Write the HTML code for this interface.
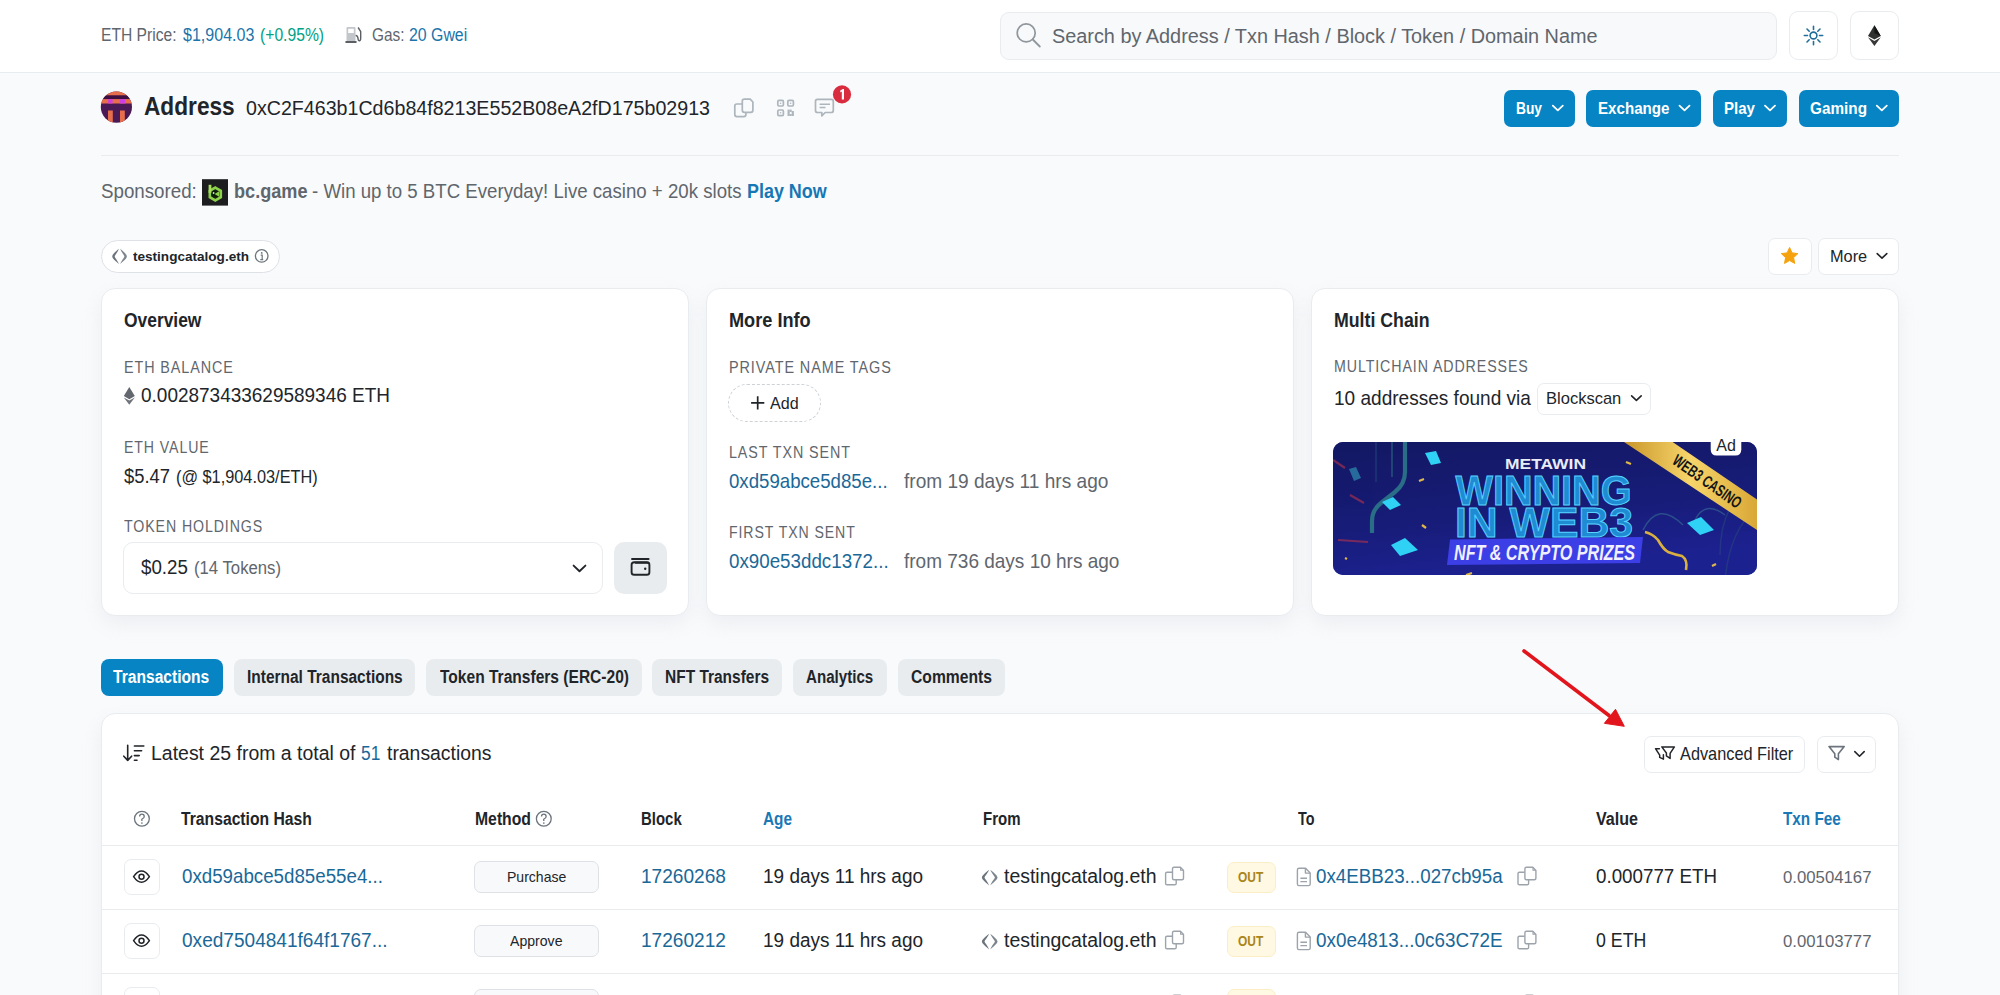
<!DOCTYPE html>
<html><head><meta charset="utf-8">
<style>
html,body{margin:0;padding:0}
body{width:2000px;height:995px;overflow:hidden;position:relative;background:#f9fafb;font-family:"Liberation Sans",sans-serif;color:#212529}
.t{position:absolute;white-space:nowrap;transform-origin:0 0}
.a{position:absolute;box-sizing:border-box}
svg{position:absolute;overflow:visible}
</style></head><body>
<!-- header -->
<div class="a" style="left:0;top:0;width:2000px;height:73px;background:#fff;border-bottom:1px solid #e9ecef"></div>
<div class="a" style="left:1000px;top:12px;width:777px;height:48px;background:#f8f9fa;border:1px solid #e9ecef;border-radius:9px"></div>
<div class="a" style="left:1789px;top:11px;width:49px;height:49px;background:#fff;border:1px solid #e9ecef;border-radius:9px"></div>
<div class="a" style="left:1850px;top:11px;width:49px;height:49px;background:#fff;border:1px solid #e9ecef;border-radius:9px"></div>
<!-- address row -->
<div class="a" style="left:101px;top:155px;width:1798px;height:1px;background:#e9ecef"></div>
<div class="a" style="left:1504px;top:89.5px;width:71px;height:37px;background:#0784c3;border-radius:7px"></div>
<div class="a" style="left:1586px;top:89.5px;width:115px;height:37px;background:#0784c3;border-radius:7px"></div>
<div class="a" style="left:1712.5px;top:89.5px;width:74.5px;height:37px;background:#0784c3;border-radius:7px"></div>
<div class="a" style="left:1799px;top:89.5px;width:100px;height:37px;background:#0784c3;border-radius:7px"></div>
<!-- name tag + more -->
<div class="a" style="left:101px;top:240px;width:179px;height:33px;background:#fff;border:1px solid #dee2e6;border-radius:17px"></div>
<div class="a" style="left:1768px;top:238px;width:44px;height:37px;background:#fff;border:1px solid #e9ecef;border-radius:7px"></div>
<div class="a" style="left:1818px;top:238px;width:81px;height:37px;background:#fff;border:1px solid #e9ecef;border-radius:7px"></div>
<!-- cards -->
<div class="a" style="left:101px;top:288px;width:588px;height:328px;background:#fff;border:1px solid #e9ecef;border-radius:14px;box-shadow:0 8px 19px rgba(189,197,209,.2)"></div>
<div class="a" style="left:706px;top:288px;width:588px;height:328px;background:#fff;border:1px solid #e9ecef;border-radius:14px;box-shadow:0 8px 19px rgba(189,197,209,.2)"></div>
<div class="a" style="left:1311px;top:288px;width:588px;height:328px;background:#fff;border:1px solid #e9ecef;border-radius:14px;box-shadow:0 8px 19px rgba(189,197,209,.2)"></div>
<div class="a" style="left:123px;top:542px;width:480px;height:52px;background:#fff;border:1px solid #e9ecef;border-radius:10px"></div>
<div class="a" style="left:614px;top:542px;width:53px;height:52px;background:#e9ecef;border-radius:10px"></div>
<div class="a" style="left:728px;top:384px;width:93px;height:38px;background:#fff;border:1.3px dashed #cdd2d7;border-radius:19px"></div>
<div class="a" style="left:1537px;top:383px;width:114px;height:32px;background:#fff;border:1px solid #e9ecef;border-radius:7px"></div>
<div class="a" style="left:1333px;top:442px;width:424px;height:133px;background:#1b2a8c;border-radius:10px"></div>
<!-- tabs -->
<div class="a" style="left:100.5px;top:659px;width:122px;height:37px;background:#0784c3;border-radius:8px"></div>
<div class="a" style="left:234px;top:659px;width:181px;height:37px;background:#e9ecef;border-radius:8px"></div>
<div class="a" style="left:426px;top:659px;width:215.5px;height:37px;background:#e9ecef;border-radius:8px"></div>
<div class="a" style="left:652px;top:659px;width:130px;height:37px;background:#e9ecef;border-radius:8px"></div>
<div class="a" style="left:793px;top:659px;width:93.5px;height:37px;background:#e9ecef;border-radius:8px"></div>
<div class="a" style="left:897.5px;top:659px;width:107px;height:37px;background:#e9ecef;border-radius:8px"></div>
<!-- txn card -->
<div class="a" style="left:101px;top:713px;width:1798px;height:400px;background:#fff;border:1px solid #e9ecef;border-radius:14px;box-shadow:0 8px 19px rgba(189,197,209,.2)"></div>
<div class="a" style="left:1643.5px;top:736px;width:161px;height:37px;background:#fff;border:1px solid #e9ecef;border-radius:7px"></div>
<div class="a" style="left:1817px;top:736px;width:59px;height:37px;background:#fff;border:1px solid #e9ecef;border-radius:7px"></div>
<div class="a" style="left:102px;top:845px;width:1796px;height:1px;background:#e9ecef"></div>
<div class="a" style="left:102px;top:908.5px;width:1796px;height:1px;background:#e9ecef"></div>
<div class="a" style="left:102px;top:972.5px;width:1796px;height:1px;background:#e9ecef"></div>
<!-- rows boxes -->
<div class="a" style="left:124px;top:859px;width:36px;height:36px;background:#fff;border:1px solid #e9ecef;border-radius:7px"></div>
<div class="a" style="left:124px;top:923px;width:36px;height:36px;background:#fff;border:1px solid #e9ecef;border-radius:7px"></div>
<div class="a" style="left:124px;top:987px;width:36px;height:36px;background:#fff;border:1px solid #e9ecef;border-radius:7px"></div>
<div class="a" style="left:474px;top:861px;width:125px;height:32px;background:#f8f9fa;border:1px solid #dee2e6;border-radius:7px"></div>
<div class="a" style="left:474px;top:925px;width:125px;height:32px;background:#f8f9fa;border:1px solid #dee2e6;border-radius:7px"></div>
<div class="a" style="left:474px;top:988.5px;width:125px;height:32px;background:#f8f9fa;border:1px solid #dee2e6;border-radius:7px"></div>
<div class="a" style="left:1226.5px;top:861.5px;width:49px;height:31px;background:#fff8e3;border:1px solid #fbeec6;border-radius:7px"></div>
<div class="a" style="left:1226.5px;top:925.5px;width:49px;height:31px;background:#fff8e3;border:1px solid #fbeec6;border-radius:7px"></div>
<div class="a" style="left:1226.5px;top:989px;width:49px;height:31px;background:#fff8e3;border:1px solid #fbeec6;border-radius:7px"></div>
<svg width="2000" height="995" style="left:0;top:0" viewBox="0 0 2000 995">
<defs>
<clipPath id="av"><circle cx="116.4" cy="107.1" r="15.6"/></clipPath>
<clipPath id="ban"><rect x="1333" y="442" width="424" height="133" rx="10"/></clipPath>
<linearGradient id="bg1" x1="0" y1="0" x2="0.3" y2="1"><stop offset="0" stop-color="#131863"/><stop offset="0.6" stop-color="#171c78"/><stop offset="1" stop-color="#1c2190"/></linearGradient>
<linearGradient id="gold" x1="0" y1="0" x2="1" y2="0"><stop offset="0" stop-color="#c9962a"/><stop offset="0.5" stop-color="#f7d56b"/><stop offset="1" stop-color="#d9a836"/></linearGradient>
<linearGradient id="wtxt" x1="0" y1="0" x2="0" y2="1"><stop offset="0" stop-color="#3fb6ea"/><stop offset="1" stop-color="#1f7fd0"/></linearGradient>
</defs>
<!-- gas pump -->
<rect x="346.5" y="27" width="9" height="14.2" rx="1.2" fill="#c3c7cb"/>
<rect x="348.2" y="28.8" width="5.6" height="4.2" fill="#fff"/>
<rect x="345.3" y="41" width="11.4" height="2" rx="0.8" fill="#5b5f63"/>
<path d="M355.6 35.4 q2.2 0.3 2.4 3 q0.2 2.6 1.6 2.4 q1.2 -0.3 1.1 -3 v-6.3 l-2.6 -4" stroke="#5b5f63" stroke-width="1.4" fill="none"/>
<!-- search -->
<circle cx="1026.2" cy="32.9" r="9" stroke="#8f969c" stroke-width="1.7" fill="none"/>
<line x1="1032.8" y1="39.5" x2="1039.8" y2="46.5" stroke="#8f969c" stroke-width="1.8" stroke-linecap="round"/>
<!-- sun -->
<g stroke="#1f6e9c" stroke-width="1.6" stroke-linecap="round" fill="none">
<circle cx="1813.5" cy="35.5" r="3.4"/>
<path d="M1813.5 26.3v3.2M1813.5 41.5v3.2M1804.3 35.5h3.2M1819.5 35.5h3.2M1807 29l2.2 2.2M1817.8 39.8l2.2 2.2M1807 42l2.2-2.2M1817.8 31.2l2.2-2.2"/>
</g>
<!-- eth header -->
<polygon points="1874.4,25.3 1880.8,35.9 1874.4,39.6 1868,35.9" fill="#2f3030"/>
<polygon points="1874.4,25.3 1880.8,35.9 1874.4,33" fill="#141414"/>
<polygon points="1868,37.3 1874.4,41.1 1880.8,37.3 1874.4,46" fill="#393939"/>
<!-- avatar -->
<g clip-path="url(#av)">
<rect x="100" y="91" width="33" height="33" fill="#4a1a56"/>
<rect x="100" y="91" width="33" height="4.5" fill="#e66e4a"/>
<rect x="100" y="95.5" width="33" height="3.6" fill="#3d1040"/>
<rect x="100" y="99.1" width="33" height="4.4" fill="#e66e4a"/>
<rect x="108.2" y="99.1" width="4.4" height="4.4" fill="#cf3ee3"/>
<rect x="119.9" y="99.1" width="5.3" height="4.4" fill="#cf3ee3"/>
<rect x="108" y="110.5" width="4.8" height="14" fill="#e66e4a"/>
<rect x="120" y="110.5" width="4.8" height="14" fill="#e66e4a"/>
</g>
<!-- copy / qr / comment -->
<g stroke="#adb5bd" stroke-width="1.7" fill="none" stroke-linejoin="round">
<path d="M744.3 99.2H750.2L752.9 102V110.3q0 2-2 2H744.3q-2 0-2-2V101.2q0-2 2-2Z"/>
<path d="M742.1 104H736.8q-2 0-2 2V114.6q0 2 2 2H743.9q2 0 2-2V112.5"/>
<rect x="777.8" y="100.4" width="5.6" height="5.6" rx="1.2"/>
<rect x="787.8" y="100.4" width="5.6" height="5.6" rx="1.2"/>
<rect x="777.8" y="110" width="5.6" height="5.6" rx="1.2"/>
<path d="M817.5 99.4H831.3q2 0 2 2V110.5q0 2-2 2H825.2L821.8 115.8V112.5H817.5q-2 0-2-2V101.4q0-2 2-2Z"/>
<path d="M819.6 104.2H830M819.6 107.6H825.5" stroke-width="1.5"/>
</g>
<g fill="#adb5bd">
<rect x="787.5" y="109.6" width="2.2" height="6.4"/><rect x="789.7" y="109.6" width="2" height="2.4"/><rect x="791.7" y="111" width="2.2" height="5"/><rect x="789.7" y="114" width="2" height="2"/>
<circle cx="780.6" cy="103.2" r="0.8"/><circle cx="790.6" cy="103.2" r="0.8"/><circle cx="780.6" cy="112.8" r="0.8"/>
</g>
<circle cx="842" cy="94.4" r="9.1" fill="#d92d3f"/>
<path d="M840.3 90.6l2.6-1.6h1.1v10.5h-2.2v-7.9l-1.5 0.9z" fill="#fff"/>
<!-- button chevrons -->
<g stroke="#fff" stroke-width="1.8" fill="none" stroke-linecap="round" stroke-linejoin="round">
<path d="M1552.8 105.6l5 4.8 5-4.8"/>
<path d="M1679.5 105.6l5 4.8 5-4.8"/>
<path d="M1765 105.6l5 4.8 5-4.8"/>
<path d="M1876.8 105.6l5 4.8 5-4.8"/>
</g>
<!-- bc logo -->
<rect x="202" y="179.2" width="26" height="26.4" fill="#1d1d20"/>
<polygon points="215.3,187.6 220.8,190.8 220.8,197.2 215.3,200.4 209.8,197.2 209.8,190.8" fill="none" stroke="#8cd14a" stroke-width="2.6"/>
<rect x="208.6" y="184.8" width="2.8" height="8" fill="#a6e05c"/>
<circle cx="215.3" cy="194" r="3.6" fill="#0b1f06"/><path d="M219.2 191.2L214.6 194L219.2 196.8Z" fill="#8cd14a"/><circle cx="213.6" cy="193" r="0.9" fill="#cfe8c0"/>
<!-- ENS name tag -->
<path d="M118.95 248.80C114.00 253.06 112.25 254.88 112.25 256.40C112.25 257.92 114.00 259.74 118.95 264.00C117.07 259.44 114.73 257.62 114.73 256.40C114.73 255.18 117.07 253.36 118.95 248.80Z" fill="#6c757d"/><path d="M120.15 248.80C125.10 253.06 126.85 254.88 126.85 256.40C126.85 257.92 125.10 259.74 120.15 264.00C122.03 259.44 124.37 257.62 124.37 256.40C124.37 255.18 122.03 253.36 120.15 248.80Z" fill="#7d858c"/>
<circle cx="261.7" cy="255.9" r="6.3" stroke="#6c757d" stroke-width="1.3" fill="none"/>
<circle cx="261.7" cy="252.9" r="0.9" fill="#6c757d"/>
<path d="M260.7 255.2h1.5v4.3M260.3 259.6h2.9" stroke="#6c757d" stroke-width="1.2" fill="none"/>
<!-- star -->
<path d="M1789.6 247.5l2.5 5.4 5.8 0.7-4.3 4 1.1 5.8-5.1-2.9-5.1 2.9 1.1-5.8-4.3-4 5.8-0.7z" fill="#f5a20e" stroke="#f5a20e" stroke-width="1" stroke-linejoin="round"/>
<path d="M1877.2 253.6l4.8 4.6 4.8-4.6" stroke="#212529" stroke-width="1.6" fill="none" stroke-linecap="round" stroke-linejoin="round"/>
<!-- overview eth -->
<polygon points="129.3,387 134.8,396 129.3,399.2 123.8,396" fill="#62686e"/>
<polygon points="123.8,397.4 129.3,400.6 134.8,397.4 129.3,404.8" fill="#6f757b"/>
<!-- token dropdown -->
<path d="M573.6 565.6l5.9 5.6 5.9-5.6" stroke="#212529" stroke-width="1.9" fill="none" stroke-linecap="round" stroke-linejoin="round"/>
<g stroke="#212529" stroke-width="1.9" fill="none" stroke-linecap="round" stroke-linejoin="round">
<path d="M632 559h16.6"/>
<rect x="631.6" y="562.2" width="17.8" height="12.6" rx="2.6"/>
<path d="M635.5 562.8h13"/>
</g>
<circle cx="645.2" cy="568.7" r="1.2" fill="#212529"/>
<!-- add plus -->
<path d="M757.7 396.3v13.2M751.1 402.9h13.2" stroke="#212529" stroke-width="1.7"/>
<!-- blockscan chevron -->
<path d="M1631.6 395.8l4.8 4.6 4.8-4.6" stroke="#212529" stroke-width="1.6" fill="none" stroke-linecap="round" stroke-linejoin="round"/>
<!-- sort icon -->
<g stroke="#212529" stroke-width="1.6" fill="none" stroke-linecap="round" stroke-linejoin="round">
<path d="M127.7 745.2v15.2M123.8 756.2l3.9 4.2 3.9-4.2"/>
<path d="M134.4 746h9.4M134.4 750.8h7.2M134.4 755.6h4.8M134.4 760.3h2.6"/>
</g>
<!-- adv filter -->
<g stroke="#212529" stroke-width="1.5" fill="none" stroke-linejoin="round" stroke-linecap="round">
<path d="M1661.8 746.9H1674.4L1670.1 753.4V758.4L1666.4 755.9V753Z"/>
<path d="M1659.4 748.7H1655.5L1659.7 755.2V757.4L1663.4 759.2V754.8"/>
</g>
<g stroke="#6c757d" stroke-width="1.6" fill="none" stroke-linejoin="round" stroke-linecap="round">
<path d="M1829 746.6h15.2l-5.8 7.2v5.8l-3.6-2.4v-3.4z"/>
</g>
<path d="M1854.8 751.6l4.7 4.6 4.7-4.6" stroke="#212529" stroke-width="1.6" fill="none" stroke-linecap="round" stroke-linejoin="round"/>
<!-- question icons -->
<g stroke="#6c757d" stroke-width="1.3" fill="none">
<circle cx="141.9" cy="818.8" r="7.4"/>
<circle cx="543.8" cy="818.8" r="7.4"/>
<path d="M139.6 816.6q0-2.4 2.3-2.4t2.3 2.2q0 1.4-1.4 2.1t-0.9 1.9v0.6M541.5 816.6q0-2.4 2.3-2.4t2.3 2.2q0 1.4-1.4 2.1t-0.9 1.9v0.6"/>
</g>
<circle cx="141.9" cy="823" r="0.85" fill="#6c757d"/><circle cx="543.8" cy="823" r="0.85" fill="#6c757d"/>
<g transform="translate(0 0)">
<path d="M133.6 876.7q3.8-5.6 7.9-5.6t7.9 5.6q-3.8 5.6-7.9 5.6t-7.9-5.6z" stroke="#212529" stroke-width="1.5" fill="none"/>
<circle cx="141.5" cy="876.7" r="2.5" stroke="#212529" stroke-width="1.5" fill="none"/>
<path d="M989.10 869.80C983.77 874.17 981.90 876.04 981.90 877.60C981.90 879.16 983.77 881.03 989.10 885.40C987.05 880.72 984.55 878.85 984.55 877.60C984.55 876.35 987.05 874.48 989.10 869.80Z" fill="#6c757d"/><path d="M990.30 869.80C995.63 874.17 997.50 876.04 997.50 877.60C997.50 879.16 995.63 881.03 990.30 885.40C992.35 880.72 994.85 878.85 994.85 877.60C994.85 876.35 992.35 874.48 990.30 869.80Z" fill="#7d858c"/>
<g stroke="#9ca3aa" stroke-width="1.4" fill="none" stroke-linejoin="round">
<path d="M1174.0 867.3H1180.4L1183.5 870.4V878.2q0 1.5-1.5 1.5H1174.0q-1.5 0-1.5-1.5V868.8q0-1.5 1.5-1.5Z"/><path d="M1172.2 872.2H1167.0q-1.4 0-1.4 1.4V883.4q0 1.4 1.4 1.4H1174.8q1.4 0 1.4-1.4V880"/><path d="M1180.6 867.6V870.3H1183.3" stroke-width="1.1"/>
<path d="M1526.4 867.3H1532.8L1535.9 870.4V878.2q0 1.5-1.5 1.5H1526.4q-1.5 0-1.5-1.5V868.8q0-1.5 1.5-1.5Z"/><path d="M1524.6 872.2H1519.4q-1.4 0-1.4 1.4V883.4q0 1.4 1.4 1.4H1527.2q1.4 0 1.4-1.4V880"/><path d="M1533.0 867.6V870.3H1535.7" stroke-width="1.1"/>
<path d="M1299 868.3H1305.6L1310.2 872.9V884q0 1.6-1.6 1.6H1299q-1.6 0-1.6-1.6V869.9q0-1.6 1.6-1.6Z"/>
<path d="M1305.4 868.6V873.1H1310"/>
<path d="M1300.4 878.2H1307M1300.4 881.6H1307"/>
</g>
</g>
<g transform="translate(0 64)">
<path d="M133.6 876.7q3.8-5.6 7.9-5.6t7.9 5.6q-3.8 5.6-7.9 5.6t-7.9-5.6z" stroke="#212529" stroke-width="1.5" fill="none"/>
<circle cx="141.5" cy="876.7" r="2.5" stroke="#212529" stroke-width="1.5" fill="none"/>
<path d="M989.10 869.80C983.77 874.17 981.90 876.04 981.90 877.60C981.90 879.16 983.77 881.03 989.10 885.40C987.05 880.72 984.55 878.85 984.55 877.60C984.55 876.35 987.05 874.48 989.10 869.80Z" fill="#6c757d"/><path d="M990.30 869.80C995.63 874.17 997.50 876.04 997.50 877.60C997.50 879.16 995.63 881.03 990.30 885.40C992.35 880.72 994.85 878.85 994.85 877.60C994.85 876.35 992.35 874.48 990.30 869.80Z" fill="#7d858c"/>
<g stroke="#9ca3aa" stroke-width="1.4" fill="none" stroke-linejoin="round">
<path d="M1174.0 867.3H1180.4L1183.5 870.4V878.2q0 1.5-1.5 1.5H1174.0q-1.5 0-1.5-1.5V868.8q0-1.5 1.5-1.5Z"/><path d="M1172.2 872.2H1167.0q-1.4 0-1.4 1.4V883.4q0 1.4 1.4 1.4H1174.8q1.4 0 1.4-1.4V880"/><path d="M1180.6 867.6V870.3H1183.3" stroke-width="1.1"/>
<path d="M1526.4 867.3H1532.8L1535.9 870.4V878.2q0 1.5-1.5 1.5H1526.4q-1.5 0-1.5-1.5V868.8q0-1.5 1.5-1.5Z"/><path d="M1524.6 872.2H1519.4q-1.4 0-1.4 1.4V883.4q0 1.4 1.4 1.4H1527.2q1.4 0 1.4-1.4V880"/><path d="M1533.0 867.6V870.3H1535.7" stroke-width="1.1"/>
<path d="M1299 868.3H1305.6L1310.2 872.9V884q0 1.6-1.6 1.6H1299q-1.6 0-1.6-1.6V869.9q0-1.6 1.6-1.6Z"/>
<path d="M1305.4 868.6V873.1H1310"/>
<path d="M1300.4 878.2H1307M1300.4 881.6H1307"/>
</g>
</g>
<g transform="translate(0 128)">
<path d="M133.6 876.7q3.8-5.6 7.9-5.6t7.9 5.6q-3.8 5.6-7.9 5.6t-7.9-5.6z" stroke="#212529" stroke-width="1.5" fill="none"/>
<circle cx="141.5" cy="876.7" r="2.5" stroke="#212529" stroke-width="1.5" fill="none"/>
<path d="M989.10 869.80C983.77 874.17 981.90 876.04 981.90 877.60C981.90 879.16 983.77 881.03 989.10 885.40C987.05 880.72 984.55 878.85 984.55 877.60C984.55 876.35 987.05 874.48 989.10 869.80Z" fill="#6c757d"/><path d="M990.30 869.80C995.63 874.17 997.50 876.04 997.50 877.60C997.50 879.16 995.63 881.03 990.30 885.40C992.35 880.72 994.85 878.85 994.85 877.60C994.85 876.35 992.35 874.48 990.30 869.80Z" fill="#7d858c"/>
<g stroke="#9ca3aa" stroke-width="1.4" fill="none" stroke-linejoin="round">
<path d="M1174.0 867.3H1180.4L1183.5 870.4V878.2q0 1.5-1.5 1.5H1174.0q-1.5 0-1.5-1.5V868.8q0-1.5 1.5-1.5Z"/><path d="M1172.2 872.2H1167.0q-1.4 0-1.4 1.4V883.4q0 1.4 1.4 1.4H1174.8q1.4 0 1.4-1.4V880"/><path d="M1180.6 867.6V870.3H1183.3" stroke-width="1.1"/>
<path d="M1526.4 867.3H1532.8L1535.9 870.4V878.2q0 1.5-1.5 1.5H1526.4q-1.5 0-1.5-1.5V868.8q0-1.5 1.5-1.5Z"/><path d="M1524.6 872.2H1519.4q-1.4 0-1.4 1.4V883.4q0 1.4 1.4 1.4H1527.2q1.4 0 1.4-1.4V880"/><path d="M1533.0 867.6V870.3H1535.7" stroke-width="1.1"/>
<path d="M1299 868.3H1305.6L1310.2 872.9V884q0 1.6-1.6 1.6H1299q-1.6 0-1.6-1.6V869.9q0-1.6 1.6-1.6Z"/>
<path d="M1305.4 868.6V873.1H1310"/>
<path d="M1300.4 878.2H1307M1300.4 881.6H1307"/>
</g>
</g><g clip-path="url(#ban)">
<rect x="1333" y="442" width="424" height="133" fill="url(#bg1)"/>
<path d="M1405 442v30q0 12-10 20l-14 11q-9 7-9 18v12" stroke="#2a6d86" stroke-width="4.2" fill="none"/>
<path d="M1392 442v35" stroke="#24507a" stroke-width="1.6" fill="none"/>
<path d="M1376 442v40" stroke="#1f3f78" stroke-width="1.2" fill="none"/>
<path d="M1333 460l12 8M1350 495l14 8M1338 540l30 2" stroke="#b8334a" stroke-width="2.2" opacity="0.6"/>
<path d="M1720 555q0-40 20-60M1725 580q5-50 30-70" stroke="#263e80" stroke-width="1.5" fill="none" opacity="0.7"/>
<path d="M1643 530q15-30 40-5M1695 520q10-20 30-5" stroke="#2f5a8f" stroke-width="1.5" fill="none" opacity="0.8"/>
<polygon points="1624,442 1672.6,442 1757,499.6 1757,530" fill="url(#gold)"/>
<text x="1704" y="486" transform="rotate(35 1704 486)" font-family="Liberation Sans" font-weight="700" font-size="16.5" fill="#151515" text-anchor="middle" textLength="80" lengthAdjust="spacingAndGlyphs">WEB3 CASINO</text>
<polygon points="1425,453 1436,451 1441,463 1431,465" fill="#2fd2f5"/>
<polygon points="1382,502 1393,497 1401,505 1390,510" fill="#2fd2f5"/>
<polygon points="1391,545 1405,538 1418,550 1400,556" fill="#2fd2f5"/>
<polygon points="1687,523 1701,517 1714,530 1700,535" fill="#2fd2f5"/>
<polygon points="1349,469 1356,467 1361,478 1354,481" fill="#2a7fa8" opacity="0.8"/>
<path d="M1645 532q8 2 13 8q5 9 10 12q8 3 14 4q6 4 4 14" stroke="#d9b040" stroke-width="2.6" fill="none"/>
<path d="M1419 481l5-2M1422 525l4 3M1345 558l2 1M1712 566l4-2M1466 575l6-2M1626 462l5 2" stroke="#e0b84a" stroke-width="2.2"/>
<text x="1545.5" y="469" font-family="Liberation Sans" font-weight="700" font-size="14.5" fill="#e8ecf5" text-anchor="middle" textLength="81" lengthAdjust="spacingAndGlyphs">METAWIN</text>
<text x="1543.5" y="505" font-family="Liberation Sans" font-weight="700" font-size="42" fill="#1f8bd3" stroke="#58d2ff" stroke-width="1" text-anchor="middle" textLength="176" lengthAdjust="spacingAndGlyphs">WINNING</text>
<text x="1544" y="537" font-family="Liberation Sans" font-weight="700" font-size="42" fill="#1f8bd3" stroke="#58d2ff" stroke-width="1" text-anchor="middle" textLength="178" lengthAdjust="spacingAndGlyphs">IN WEB3</text>
<polygon points="1450,539.5 1643,537 1640,563 1447,565" fill="#3c3fe6"/>
<text x="1544.5" y="559.5" font-family="Liberation Sans" font-weight="700" font-style="italic" font-size="22" fill="#f0f0ff" text-anchor="middle" textLength="181" lengthAdjust="spacingAndGlyphs">NFT &amp; CRYPTO PRIZES</text>
</g>
<path d="M1710.7 440h30.6v9.5q0 6-6 6h-18.6q-6 0-6-6z" fill="#fff"/>
<text x="1726" y="451" font-family="Liberation Sans" font-size="16" fill="#212529" text-anchor="middle">Ad</text>
<!-- red arrow -->
<line x1="1524" y1="651" x2="1609" y2="715.5" stroke="#e2141c" stroke-width="3.6" stroke-linecap="round"/>
<polygon points="1624.3,726.3 1615.5,709.3 1604.4,723.3" fill="#e2141c" stroke="#e2141c" stroke-width="1" stroke-linejoin="round"/>
</svg>
<div id="h_ethp" class="t" style="left:101.0px;top:27.00px;font-size:17.44px;line-height:17.44px;font-weight:400;color:#5f666d;transform:scaleX(0.8968)">ETH Price:</div>
<div id="h_price" class="t" style="left:182.5px;top:27.00px;font-size:17.44px;line-height:17.44px;font-weight:400;color:#1b74aa;transform:scaleX(0.9204)">$1,904.03</div>
<div id="h_pct" class="t" style="left:259.5px;top:27.00px;font-size:17.44px;line-height:17.44px;font-weight:400;color:#00a186;transform:scaleX(0.8996)">(+0.95%)</div>
<div id="h_gas" class="t" style="left:371.9px;top:27.00px;font-size:17.44px;line-height:17.44px;font-weight:400;color:#5f666d;transform:scaleX(0.8825)">Gas:</div>
<div id="h_gwei" class="t" style="left:409.3px;top:27.00px;font-size:17.44px;line-height:17.44px;font-weight:400;color:#1b74aa;transform:scaleX(0.9098)">20 Gwei</div>
<div id="h_search" class="t" style="left:1052.0px;top:27.00px;font-size:19.77px;line-height:19.77px;font-weight:400;color:#5f666d;transform:scaleX(1.0046)">Search by Address / Txn Hash / Block / Token / Domain Name</div>
<div id="a_title" class="t" style="left:143.5px;top:94.00px;font-size:25.44px;line-height:25.44px;font-weight:700;color:#212529;transform:scaleX(0.8910)">Address</div>
<div id="a_hash" class="t" style="left:246.0px;top:98.00px;font-size:20.06px;line-height:20.06px;font-weight:400;color:#212529;transform:scaleX(0.9795)">0xC2F463b1Cd6b84f8213E552B08eA2fD175b02913</div>
<div id="b_buy" class="t" style="left:1516.0px;top:101.00px;font-size:16.86px;line-height:16.86px;font-weight:700;color:#fff;transform:scaleX(0.8161)">Buy</div>
<div id="b_exch" class="t" style="left:1597.5px;top:101.00px;font-size:16.86px;line-height:16.86px;font-weight:700;color:#fff;transform:scaleX(0.8976)">Exchange</div>
<div id="b_play" class="t" style="left:1724.0px;top:101.00px;font-size:16.86px;line-height:16.86px;font-weight:700;color:#fff;transform:scaleX(0.8937)">Play</div>
<div id="b_gaming" class="t" style="left:1810.0px;top:101.00px;font-size:16.86px;line-height:16.86px;font-weight:700;color:#fff;transform:scaleX(0.9081)">Gaming</div>
<div id="s_lbl" class="t" style="left:100.7px;top:181.00px;font-size:20.06px;line-height:20.06px;font-weight:400;color:#5f666d;transform:scaleX(0.9342)">Sponsored:</div>
<div id="s_bc" class="t" style="left:233.5px;top:181.00px;font-size:20.06px;line-height:20.06px;font-weight:700;color:#5f666d;transform:scaleX(0.9036)">bc.game</div>
<div id="s_txt" class="t" style="left:312.0px;top:181.00px;font-size:20.06px;line-height:20.06px;font-weight:400;color:#5f666d;transform:scaleX(0.9300)">- Win up to 5 BTC Everyday! Live casino + 20k slots</div>
<div id="s_play" class="t" style="left:746.5px;top:181.00px;font-size:20.06px;line-height:20.06px;font-weight:700;color:#1677b5;transform:scaleX(0.8942)">Play Now</div>
<div id="n_tag" class="t" style="left:132.5px;top:250.00px;font-size:13.52px;line-height:13.52px;font-weight:700;color:#212529;transform:scaleX(1.0030)">testingcatalog.eth</div>
<div id="more" class="t" style="left:1829.6px;top:249.00px;font-size:16.86px;line-height:16.86px;font-weight:400;color:#212529;transform:scaleX(0.9682)">More</div>
<div id="o_title" class="t" style="left:123.8px;top:311.00px;font-size:19.77px;line-height:19.77px;font-weight:700;color:#212529;transform:scaleX(0.8805)">Overview</div>
<div id="o_bal_l" class="t" style="left:123.8px;top:360.00px;font-size:15.70px;line-height:15.70px;font-weight:400;color:#5f666d;transform:scaleX(0.9151);letter-spacing:1.0px">ETH BALANCE</div>
<div id="o_bal" class="t" style="left:141.4px;top:386.00px;font-size:19.48px;line-height:19.48px;font-weight:400;color:#212529;transform:scaleX(0.9746)">0.002873433629589346 ETH</div>
<div id="o_val_l" class="t" style="left:123.8px;top:440.00px;font-size:15.70px;line-height:15.70px;font-weight:400;color:#5f666d;transform:scaleX(0.9009);letter-spacing:1.0px">ETH VALUE</div>
<div id="o_val" class="t" style="left:124.0px;top:467.00px;font-size:19.77px;line-height:19.77px;font-weight:400;color:#212529;transform:scaleX(0.9319)">$5.47</div>
<div id="o_val2" class="t" style="left:176.3px;top:469.00px;font-size:17.44px;line-height:17.44px;font-weight:400;color:#212529;transform:scaleX(0.9355)">(@ $1,904.03/ETH)</div>
<div id="o_tok_l" class="t" style="left:123.8px;top:519.00px;font-size:15.70px;line-height:15.70px;font-weight:400;color:#5f666d;transform:scaleX(0.9029);letter-spacing:1.0px">TOKEN HOLDINGS</div>
<div id="o_tok" class="t" style="left:140.8px;top:558.00px;font-size:19.77px;line-height:19.77px;font-weight:400;color:#212529;transform:scaleX(0.9481)">$0.25</div>
<div id="o_tok2" class="t" style="left:194.0px;top:560.00px;font-size:17.44px;line-height:17.44px;font-weight:400;color:#5f666d;transform:scaleX(0.9582)">(14 Tokens)</div>
<div id="m_title" class="t" style="left:728.7px;top:311.00px;font-size:19.77px;line-height:19.77px;font-weight:700;color:#212529;transform:scaleX(0.9186)">More Info</div>
<div id="m_pnt" class="t" style="left:728.7px;top:360.00px;font-size:15.70px;line-height:15.70px;font-weight:400;color:#5f666d;transform:scaleX(0.9186);letter-spacing:1.0px">PRIVATE NAME TAGS</div>
<div id="m_add" class="t" style="left:769.6px;top:396.00px;font-size:16.72px;line-height:16.72px;font-weight:400;color:#212529;transform:scaleX(0.9652)">Add</div>
<div id="m_last_l" class="t" style="left:728.6px;top:445.00px;font-size:15.70px;line-height:15.70px;font-weight:400;color:#5f666d;transform:scaleX(0.9124);letter-spacing:1.0px">LAST TXN SENT</div>
<div id="m_last" class="t" style="left:728.6px;top:472.00px;font-size:19.62px;line-height:19.62px;font-weight:400;color:#1a6898;transform:scaleX(0.9507)">0xd59abce5d85e...</div>
<div id="m_last2" class="t" style="left:903.6px;top:472.00px;font-size:19.62px;line-height:19.62px;font-weight:400;color:#5f666d;transform:scaleX(0.9733)">from 19 days 11 hrs ago</div>
<div id="m_first_l" class="t" style="left:728.6px;top:525.00px;font-size:15.70px;line-height:15.70px;font-weight:400;color:#5f666d;transform:scaleX(0.9008);letter-spacing:1.0px">FIRST TXN SENT</div>
<div id="m_first" class="t" style="left:728.6px;top:552.00px;font-size:19.62px;line-height:19.62px;font-weight:400;color:#1a6898;transform:scaleX(0.9567)">0x90e53ddc1372...</div>
<div id="m_first2" class="t" style="left:903.6px;top:552.00px;font-size:19.62px;line-height:19.62px;font-weight:400;color:#5f666d;transform:scaleX(0.9686)">from 736 days 10 hrs ago</div>
<div id="c_title" class="t" style="left:1333.9px;top:311.00px;font-size:19.77px;line-height:19.77px;font-weight:700;color:#212529;transform:scaleX(0.8975)">Multi Chain</div>
<div id="c_mca" class="t" style="left:1333.6px;top:359.00px;font-size:15.70px;line-height:15.70px;font-weight:400;color:#5f666d;transform:scaleX(0.9057);letter-spacing:1.0px">MULTICHAIN ADDRESSES</div>
<div id="c_found" class="t" style="left:1333.6px;top:389.00px;font-size:19.62px;line-height:19.62px;font-weight:400;color:#212529;transform:scaleX(0.9710)">10 addresses found via</div>
<div id="c_bs" class="t" style="left:1546.0px;top:390.00px;font-size:17.15px;line-height:17.15px;font-weight:400;color:#212529;transform:scaleX(0.9638)">Blockscan</div>
<div id="tab1" class="t" style="left:113.4px;top:669.00px;font-size:17.44px;line-height:17.44px;font-weight:700;color:#fff;transform:scaleX(0.8952)">Transactions</div>
<div id="tab2" class="t" style="left:246.6px;top:669.00px;font-size:17.44px;line-height:17.44px;font-weight:700;color:#212529;transform:scaleX(0.8877)">Internal Transactions</div>
<div id="tab3" class="t" style="left:439.5px;top:669.00px;font-size:17.44px;line-height:17.44px;font-weight:700;color:#212529;transform:scaleX(0.8920)">Token Transfers (ERC-20)</div>
<div id="tab4" class="t" style="left:665.4px;top:669.00px;font-size:17.44px;line-height:17.44px;font-weight:700;color:#212529;transform:scaleX(0.8877)">NFT Transfers</div>
<div id="tab5" class="t" style="left:806.4px;top:669.00px;font-size:17.44px;line-height:17.44px;font-weight:700;color:#212529;transform:scaleX(0.8666)">Analytics</div>
<div id="tab6" class="t" style="left:910.5px;top:669.00px;font-size:17.44px;line-height:17.44px;font-weight:700;color:#212529;transform:scaleX(0.8989)">Comments</div>
<div id="x_latest" class="t" style="left:150.5px;top:744.00px;font-size:19.77px;line-height:19.77px;font-weight:400;color:#212529;transform:scaleX(0.9848)">Latest 25 from a total of</div>
<div id="x_51" class="t" style="left:360.5px;top:744.00px;font-size:19.77px;line-height:19.77px;font-weight:400;color:#1a6898;transform:scaleX(0.8773)">51</div>
<div id="x_trans" class="t" style="left:386.5px;top:744.00px;font-size:19.77px;line-height:19.77px;font-weight:400;color:#212529;transform:scaleX(0.9805)">transactions</div>
<div id="x_adv" class="t" style="left:1680.3px;top:745.00px;font-size:18.31px;line-height:18.31px;font-weight:400;color:#212529;transform:scaleX(0.8912)">Advanced Filter</div>
<div id="th_hash" class="t" style="left:181.3px;top:811.00px;font-size:17.44px;line-height:17.44px;font-weight:700;color:#212529;transform:scaleX(0.9005)">Transaction Hash</div>
<div id="th_method" class="t" style="left:474.5px;top:811.00px;font-size:17.44px;line-height:17.44px;font-weight:700;color:#212529;transform:scaleX(0.9032)">Method</div>
<div id="th_block" class="t" style="left:641.3px;top:811.00px;font-size:17.44px;line-height:17.44px;font-weight:700;color:#212529;transform:scaleX(0.8568)">Block</div>
<div id="th_age" class="t" style="left:763.0px;top:811.00px;font-size:17.44px;line-height:17.44px;font-weight:700;color:#1a78b6;transform:scaleX(0.8800)">Age</div>
<div id="th_from" class="t" style="left:982.5px;top:811.00px;font-size:17.44px;line-height:17.44px;font-weight:700;color:#212529;transform:scaleX(0.8602)">From</div>
<div id="th_to" class="t" style="left:1297.5px;top:811.00px;font-size:17.44px;line-height:17.44px;font-weight:700;color:#212529;transform:scaleX(0.8244)">To</div>
<div id="th_value" class="t" style="left:1596.0px;top:811.00px;font-size:17.44px;line-height:17.44px;font-weight:700;color:#212529;transform:scaleX(0.9218)">Value</div>
<div id="th_fee" class="t" style="left:1783.4px;top:811.00px;font-size:17.44px;line-height:17.44px;font-weight:700;color:#1a78b6;transform:scaleX(0.8770)">Txn Fee</div>
<div id="r0_hash" class="t" style="left:181.8px;top:867.00px;font-size:19.62px;line-height:19.62px;font-weight:400;color:#1a6898;transform:scaleX(0.9546)">0xd59abce5d85e55e4...</div>
<div id="r0_method" class="t" style="left:507.0px;top:869.00px;font-size:15.41px;line-height:15.41px;font-weight:400;color:#212529;transform:scaleX(0.9110)">Purchase</div>
<div id="r0_block" class="t" style="left:641.3px;top:867.00px;font-size:19.33px;line-height:19.33px;font-weight:400;color:#1a6898;transform:scaleX(0.9884)">17260268</div>
<div id="r0_age" class="t" style="left:763.0px;top:867.00px;font-size:19.33px;line-height:19.33px;font-weight:400;color:#212529;transform:scaleX(0.9818)">19 days 11 hrs ago</div>
<div id="r0_from" class="t" style="left:1004.0px;top:867.00px;font-size:19.33px;line-height:19.33px;font-weight:400;color:#212529;transform:scaleX(1.0065)">testingcatalog.eth</div>
<div id="r0_out" class="t" style="left:1238.4px;top:869.00px;font-size:15.12px;line-height:15.12px;font-weight:700;color:#a9861a;transform:scaleX(0.7898)">OUT</div>
<div id="r0_to" class="t" style="left:1316.4px;top:867.00px;font-size:19.33px;line-height:19.33px;font-weight:400;color:#1a6898;transform:scaleX(0.9701)">0x4EBB23...027cb95a</div>
<div id="r0_val" class="t" style="left:1596.0px;top:867.00px;font-size:19.33px;line-height:19.33px;font-weight:400;color:#212529;transform:scaleX(0.9707)">0.000777 ETH</div>
<div id="r0_fee" class="t" style="left:1783.4px;top:870.00px;font-size:16.86px;line-height:16.86px;font-weight:400;color:#5f666d;transform:scaleX(0.9935)">0.00504167</div>
<div id="r1_hash" class="t" style="left:181.8px;top:931.00px;font-size:19.62px;line-height:19.62px;font-weight:400;color:#1a6898;transform:scaleX(0.9719)">0xed7504841f64f1767...</div>
<div id="r1_method" class="t" style="left:510.0px;top:933.00px;font-size:15.41px;line-height:15.41px;font-weight:400;color:#212529;transform:scaleX(0.9148)">Approve</div>
<div id="r1_block" class="t" style="left:641.3px;top:931.00px;font-size:19.33px;line-height:19.33px;font-weight:400;color:#1a6898;transform:scaleX(0.9884)">17260212</div>
<div id="r1_age" class="t" style="left:763.0px;top:931.00px;font-size:19.33px;line-height:19.33px;font-weight:400;color:#212529;transform:scaleX(0.9818)">19 days 11 hrs ago</div>
<div id="r1_from" class="t" style="left:1004.0px;top:931.00px;font-size:19.33px;line-height:19.33px;font-weight:400;color:#212529;transform:scaleX(1.0065)">testingcatalog.eth</div>
<div id="r1_out" class="t" style="left:1238.4px;top:933.00px;font-size:15.12px;line-height:15.12px;font-weight:700;color:#a9861a;transform:scaleX(0.7898)">OUT</div>
<div id="r1_to" class="t" style="left:1316.4px;top:931.00px;font-size:19.33px;line-height:19.33px;font-weight:400;color:#1a6898;transform:scaleX(0.9755)">0x0e4813...0c63C72E</div>
<div id="r1_val" class="t" style="left:1596.0px;top:931.00px;font-size:19.33px;line-height:19.33px;font-weight:400;color:#212529;transform:scaleX(0.9182)">0 ETH</div>
<div id="r1_fee" class="t" style="left:1783.4px;top:934.00px;font-size:16.86px;line-height:16.86px;font-weight:400;color:#5f666d;transform:scaleX(0.9935)">0.00103777</div>
</body></html>
